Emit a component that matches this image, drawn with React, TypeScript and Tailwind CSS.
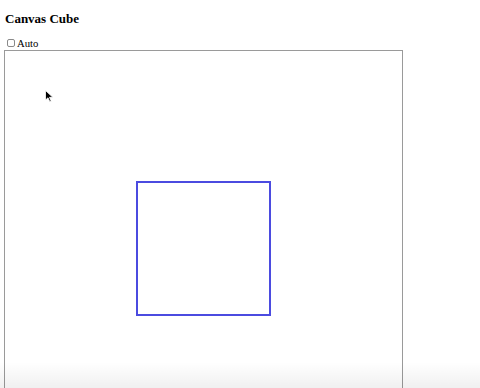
import React from 'react'

export default function App() {
  return (
    <div className="relative h-[388px] w-[480px] overflow-hidden bg-white px-[5px] font-['Liberation_Serif',serif] text-black">
      <h3 className="pt-[11px] text-[13px] font-bold leading-[15px]">Canvas Cube</h3>

      <label className="mt-[11px] flex items-center gap-[2px] text-[10.7px] leading-[12px]">
        <span className="ml-[2px] h-[8px] w-[8px] rounded-[2px] border border-[#8a8a8a] bg-white" />
        Auto
      </label>

      {/* canvas area */}
      <div className="relative mt-[1px] h-[360px] w-[399px] -ml-[1px] border border-[#9a9a9a]">
        <svg width="397" height="358" className="block">
          <rect x="132" y="131" width="133" height="133" fill="none" stroke="#4b4be0" strokeWidth="2" />
        </svg>
      </div>

      {/* fade at the bottom edge */}
      <div className="pointer-events-none absolute bottom-0 left-0 right-0 h-[26px] bg-gradient-to-b from-transparent to-black/[0.06]" />

      {/* mouse pointer */}
      <svg className="absolute left-[45px] top-[90px]" width="9" height="13" viewBox="0 0 9 13">
        <path d="M0.5 0.5 L0.5 10 L3 7.8 L4.8 11.8 L6.2 11.2 L4.5 7.3 L7.8 7.3 Z" fill="#000" stroke="#fff" strokeWidth="0.8" />
      </svg>
    </div>
  )
}
